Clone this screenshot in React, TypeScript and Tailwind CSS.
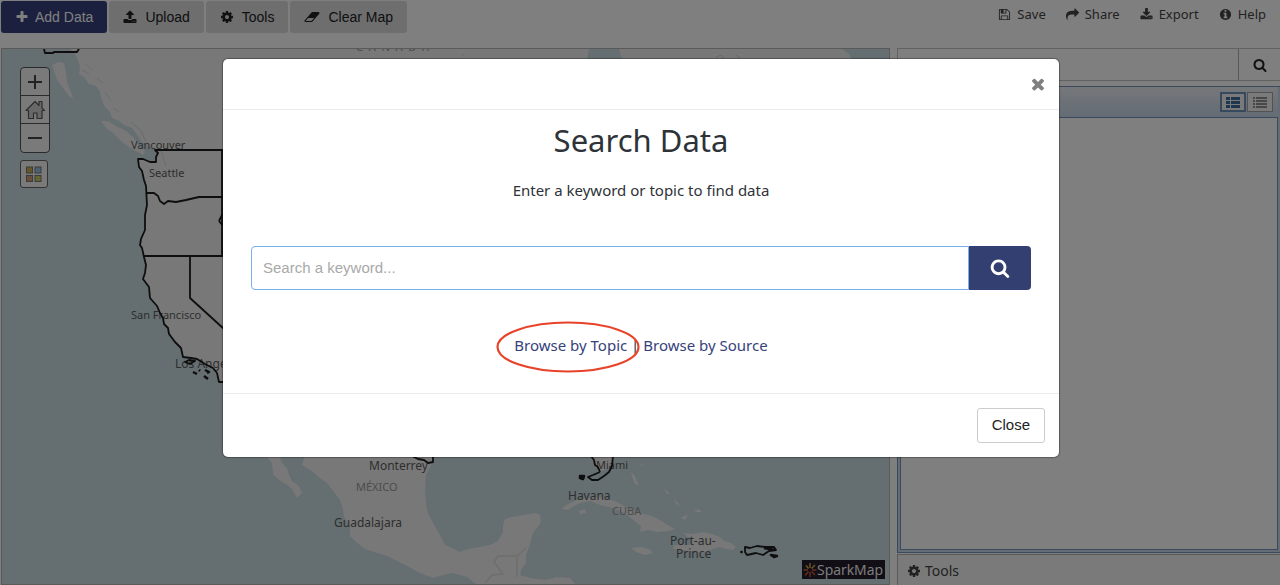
import type { ReactNode } from "react";

const icons = {
  plus: "M1600 736v192q0 40-28 68t-68 28h-416v416q0 40-28 68t-68 28h-192q-40 0-68-28t-28-68v-416h-416q-40 0-68-28t-28-68v-192q0-40 28-68t68-28h416v-416q0-40 28-68t68-28h192q40 0 68 28t28 68v416h416q40 0 68 28t28 68z",
  upload:
    "M1344 1472q0-26-19-45t-45-19-45 19-19 45 19 45 45 19 45-19 19-45zm256 0q0-26-19-45t-45-19-45 19-19 45 19 45 45 19 45-19 19-45zm128-224v320q0 40-28 68t-68 28h-1472q-40 0-68-28t-28-68v-320q0-40 28-68t68-28h427q21 56 70.5 92t110.5 36h256q61 0 110.5-36t70.5-92h427q40 0 68 28t28 68zm-325-648q-17 40-59 40h-256v448q0 26-19 45t-45 19h-256q-26 0-45-19t-19-45v-448h-256q-42 0-59-40-17-39 14-69l448-448q18-19 45-19t45 19l448 448q31 30 14 69z",
  cog: "M1152 896q0-106-75-181t-181-75-181 75-75 181 75 181 181 75 181-75 75-181zm512-109v222q0 12-8 23t-20 13l-185 28q-19 54-39 91 35 50 107 138 10 12 10 25t-9 23q-27 37-99 108t-94 71q-12 0-26-9l-138-108q-44 23-91 38-16 136-29 186-7 28-36 28h-222q-14 0-24.5-8.5t-11.5-21.5l-28-184q-49-16-90-37l-141 107q-10 9-25 9-14 0-25-11-126-114-165-168-7-10-7-23 0-12 8-23 15-21 51-66.5t54-70.5q-27-50-41-99l-183-27q-13-2-21-12.5t-8-23.5v-222q0-12 8-23t19-13l186-28q14-46 39-92-40-57-107-138-10-12-10-24 0-10 9-23 26-36 98.5-107.5t94.5-71.5q13 0 26 10l138 107q44-23 91-38 16-136 29-186 7-28 36-28h222q14 0 24.5 8.5t11.5 21.5l28 184q49 16 90 37l142-107q9-9 24-9 13 0 25 10 129 119 165 170 7 8 7 22 0 12-8 23-15 21-51 66.5t-54 70.5q26 50 41 98l183 28q13 2 21 12.5t8 23.5z",
  save: "M512 1536h768v-384h-768v384zm896 0h128v-896q0-14-10-38.5t-20-34.5l-281-281q-10-10-34-20t-39-10v416q0 40-28 68t-68 28h-576q-40 0-68-28t-28-68v-416h-128v1280h128v-416q0-40 28-68t68-28h832q40 0 68 28t28 68v416zm-384-928v-320q0-13-9.5-22.5t-22.5-9.5h-192q-13 0-22.5 9.5t-9.5 22.5v320q0 13 9.5 22.5t22.5 9.5h192q13 0 22.5-9.5t9.5-22.5zm640 32v928q0 40-28 68t-68 28h-1344q-40 0-68-28t-28-68v-1344q0-40 28-68t68-28h928q40 0 88 20t76 48l280 280q28 28 48 76t20 88z",
  share:
    "M1792 640q0 26-19 45l-512 512q-19 19-45 19t-45-19-19-45v-256h-224q-98 0-175.5 6t-154 21.5-133 42.5-105.5 69.5-80 101-48.5 138.5-17.5 181q0 55 5 123 0 6 2.5 23.5t2.5 26.5q0 15-8.500 25t-23.500 10q-16 0-28-17-7-9-13-22t-13.500-30-10.500-24q-127-285-127-451 0-199 53-333 162-403 875-403h224v-256q0-26 19-45t45-19 45 19l512 512q19 19 19 45z",
  download:
    "M1344 1344q0-26-19-45t-45-19-45 19-19 45 19 45 45 19 45-19 19-45zm256 0q0-26-19-45t-45-19-45 19-19 45 19 45 45 19 45-19 19-45zm128-224v320q0 40-28 68t-68 28h-1472q-40 0-68-28t-28-68v-320q0-40 28-68t68-28h465l135 136q58 56 136 56t136-56l136-136h464q40 0 68 28t28 68zm-325-569q17 41-14 70l-448 448q-18 19-45 19t-45-19l-448-448q-31-29-14-70 17-39 59-39h256v-448q0-26 19-45t45-19h256q26 0 45 19t19 45v448h256q42 0 59 39z",
  info: "M1152 1376v-160q0-14-9-23t-23-9h-96v-512q0-14-9-23t-23-9h-320q-14 0-23 9t-9 23v160q0 14 9 23t23 9h96v320h-96q-14 0-23 9t-9 23v160q0 14 9 23t23 9h448q14 0 23-9t9-23zm-128-896v-160q0-14-9-23t-23-9h-192q-14 0-23 9t-9 23v160q0 14 9 23t23 9h192q14 0 23-9t9-23zm640 416q0 209-103 385.5t-279.5 279.5-385.5 103-385.5-103-279.5-279.5-103-385.5 103-385.5 279.5-279.5 385.5-103 385.5 103 279.5 279.5 103 385.5z",
  search:
    "M1216 832q0-185-131.5-316.5t-316.5-131.5-316.5 131.5-131.5 316.5 131.5 316.5 316.5 131.5 316.5-131.5 131.5-316.5zm512 832q0 52-38 90t-90 38q-54 0-90-38l-343-342q-179 124-399 124-143 0-273.5-55.5t-225-150-150-225-55.5-273.5 55.5-273.5 150-225 225-150 273.5-55.5 273.5 55.5 225 150 150 225 55.5 273.5q0 220-124 399l343 343q37 37 37 90z",
  times:
    "M1490 1322q0 40-28 68l-136 136q-28 28-68 28t-68-28l-294-294-294 294q-28 28-68 28t-68-28l-136-136q-28-28-28-68t28-68l294-294-294-294q-28-28-28-68t28-68l136-136q28-28 68-28t68 28l294 294 294-294q28-28 68-28t68 28l136 136q28 28 28 68t-28 68l-294 294 294 294q28 28 28 68z",
};

function Icon({ name, className }: { name: keyof typeof icons; className: string }) {
  return (
    <svg viewBox="0 0 1792 1792" fill="currentColor" className={className} aria-hidden="true">
      <path d={icons[name]} />
    </svg>
  );
}

function Eraser() {
  return (
    <svg viewBox="0 0 2048 1792" fill="currentColor" className="h-3.5 w-4" aria-hidden="true">
      <path d="M960 1408l336-384h-768l-336 384h768zm1013-1077q15 34 9.5 71.5t-30.5 65.5l-896 1024q-38 44-96 44h-768q-38 0-69.5-20.5t-47.5-54.5q-15-34-9.5-71.5t30.5-65.5l896-1024q38-44 96-44h768q38 0 69.5 20.5t47.5 54.5z" />
    </svg>
  );
}

function ToolButton({ icon, label, primary }: { icon: ReactNode; label: string; primary?: boolean }) {
  return (
    <button
      className={
        primary
          ? "flex h-8 items-center gap-1.5 rounded-[3px] bg-[#36407c] px-3.5 text-sm text-white"
          : "flex h-8 items-center gap-2 rounded-[3px] bg-[#dcdcdc] px-3.5 text-sm text-[#222]"
      }
    >
      {icon}
      {label}
    </button>
  );
}

const links: { icon: keyof typeof icons; label: string }[] = [
  { icon: "save", label: "Save" },
  { icon: "share", label: "Share" },
  { icon: "download", label: "Export" },
  { icon: "info", label: "Help" },
];

function Header() {
  return (
    <header className="flex h-12 shrink-0 items-start justify-between pt-px pr-3.5 pl-px">
      <div className="flex gap-0.5">
        <ToolButton primary icon={<Icon name="plus" className="size-3.5" />} label="Add Data" />
        <ToolButton icon={<Icon name="upload" className="size-3.5" />} label="Upload" />
        <ToolButton icon={<Icon name="cog" className="size-3.5" />} label="Tools" />
        <ToolButton icon={<Eraser />} label="Clear Map" />
      </div>
      <nav className="flex gap-5 pt-[3px] font-['Noto_Sans',sans-serif] text-[13px] leading-5 text-[#444]">
        {links.map((l) => (
          <a key={l.label} href="#" className="flex items-center gap-1.5">
            <Icon name={l.icon} className="size-[13px]" />
            {l.label}
          </a>
        ))}
      </nav>
    </header>
  );
}

/* BASEMAP */
function Basemap() {
  return (
    <svg
      viewBox="2 49 887 535"
      preserveAspectRatio="xMinYMin slice"
      className="absolute inset-0 h-full w-full"
      aria-label="Map of North America"
    >
      <rect x="0" y="0" width="1400" height="900" fill="#cadce2" />

      {/* land */}
      <g fill="#f1f0f0">
        <path d="M70 49L74 52L77 58L80 66L79 74L84 77L89 84L96 86L100 92L102 101L105 107L110 112L112 118L119 121L124 125L132 128L137 135L142 142L148 146L157 151L156 162L150 162L143 159L138 159L140 168L144 178L147 192L147 205L145 230L140 245L144 257L146 265L143 279L149 287L150 298L157 308L163 318L168 330L175 340L182 349L183 357L197 359L213 368L219 382L240 382L600 400L600 100L586 66L589 49z" />
        <path d="M619 49L622 60L640 75L840 75L846 66L852 60L849 54L842 49z" />
        <path d="M52 65L58 62L64 63L66 72L67 82L71 92L73 99L68 95L63 88L57 80z" />
        <path d="M101 121L108 121L116 126L126 131L133 137L138 144L145 151L144 155L137 152L129 147L121 141L113 133L107 129z" />
        <path d="M267 457L272 463L273 474L279 480L287 485L292 489L297 498L302 493L299 486L292 481L289 475L287 468L282 463L280 457z" />
        <path d="M305 455L302 465L313 472L320 478L327 483L334 492L340 500L343 509L344 517L350 526L350 536L356 542L365 549L387 556L407 566L420 573L433 578L443 575L453 573L467 577L477 585L577 585L567 579L557 577L546 580L530 578L520 575L522 568L526 563L526 555L529 547L531 540L533 533L538 527L541 522L540 515L536 513L523 515L512 517L505 519L503 525L503 532L498 541L490 545L480 547L468 549L460 552L452 548L445 545L441 537L437 530L432 521L428 513L426 504L425 490L426 475L432 463L433 455z" />
        <path d="M590 455L595 465L600 472L610 467L613 455z" />
        <path d="M561 509L568 504L577 500L587 498L597 497L606 498L617 502L628 508L640 513L652 516L660 520L668 525L675 529L669 531L657 532L648 530L640 532L641 526L632 519L623 512L612 508L600 505L590 501L580 503L567 510z" />
        <path d="M579 511L585 509L586 513L580 514z" />
        <path d="M683 533L692 534L703 532L712 534L720 537L724 541L731 543L736 547L733 550L727 549L719 547L710 550L702 553L690 551L673 549L674 545L690 545L692 540z" />
        <path d="M631 548L641 547L649 549L653 553L645 555L636 552z" />
        <path d="M560 577L570 578L575 584L560 584z" />
        <path d="M631 472L635 476L639 486L634 483zM664 488L670 494L667 494zM674 499L680 505L676 504zM681 518L688 514L685 520zM694 511L699 509L702 512L697 512zM640 463L645 466L641 465z" />
      </g>

      {/* inlets along the coast */}
      <g fill="none" stroke="#cadce2" strokeWidth="1">
        <path d="M82 70L89 74M86 64L92 70M97 78L103 83M105 92L111 101M113 108L119 112M131 122L141 131L146 142M157 146L162 153L166 166M161 174L160 179" />
        <path d="M461 54l4 2M716 57l5-2l3 4M736 55l4 3" />
      </g>
      <path d="M485 583L492 575L503 574L494 562L498 556L517 556L517 577M517 556L526 548" fill="none" stroke="#dedcdc" strokeWidth="1.5" />

      {/* city labels */}
      <g className="font-['Noto_Sans',sans-serif]" fontSize="12" fill="#5c5c5c">
        <text x="131" y="149" fontSize="11">Vancouver</text>
        <text x="149" y="177" fontSize="11">Seattle</text>
        <text x="131" y="319" fontSize="11">San Francisco</text>
        <text x="175" y="368">Los Angeles</text>
        <text x="369" y="470">Monterrey</text>
        <text x="334" y="527">Guadalajara</text>
        <text x="596" y="469" fontSize="11">Miami</text>
        <text x="568" y="500">Havana</text>
        <text x="670" y="545">
          Port-au-
          <tspan x="676" y="558">Prince</tspan>
        </text>
        <g fontSize="11" fill="#999">
          <text x="356" y="491">MÉXICO</text>
          <text x="612" y="515">CUBA</text>
          <text x="356" y="51">{"C\u00a0\u00a0A\u00a0\u00a0N\u00a0\u00a0A\u00a0\u00a0D\u00a0\u00a0A"}</text>
        </g>
      </g>

      {/* state outlines */}
      <g fill="none" stroke="#1c1c1c" strokeWidth="1.8" strokeLinejoin="round">
        <path d="M44 49L45 53L53 53L54 52L77 52L79 49" />
        <path d="M223 150L155 150L158 153L156 157L156 162L150 162L143 159L138 159L139 167L142 171L144 180L146 186L147 205L145 215L145 230L141 239L140 245L142 248L144 257L146 265L145 273L143 279L149 287L150 298L157 306L160 313L163 318L164 324L168 328L169 334L175 342L181 348L183 357L191 358L197 359L205 364L213 368L217 373L219 382L224 382" />
        <path d="M147 193L154 193L158 196L160 201L164 204L168 201L176 202L186 200L199 197L223 197M222 150L222 256M144 256L224 256M190 256L190 298L224 329M219 221L223 213M219 221L223 226" />
        <path d="M185 362L189 360L195 361L190 364z" />
        <path d="M412 456L418 459L424 460L428 463L433 462L433 456" />
        <path d="M590 455L594 460L595 465L598 467L600 472M613 456L612 466L609 472L604 476L598 480L592 480L588 477L593 475L600 472" />
        <path d="M745 547L750 548L757 546L765 547L774 547L776 550L769 551L763 555L756 553L747 555L745 552z" />
        <path d="M764 548L775 550M771 555L777 556L774 557zM741 551L742 553M580 476L584 476L583 479L580 478z" strokeWidth="2.5" />
        <path d="M193 372L197 374M205 370L209 372L207 373M204 376L208 379M199 370L200 371" strokeWidth="2.5" />
      </g>
    </svg>
  );
}

function MapControls() {
  return (
    <div className="absolute top-[18px] left-[18px] flex flex-col items-start gap-[7px]">
      <div className="flex w-[30px] flex-col divide-y divide-[#555] overflow-hidden rounded-[4px] border border-[#555] bg-[#f4f4f4] text-[#444]">
        <button aria-label="Zoom in" className="flex h-7 items-center justify-center">
          <svg viewBox="0 0 14 14" className="size-3.5" stroke="currentColor" strokeWidth="2">
            <path d="M7 0v14M0 7h14" />
          </svg>
        </button>
        <button aria-label="Default extent" className="flex h-7 items-center justify-center">
          <svg viewBox="0 0 20 20" className="size-5" fill="#d0d0d0" stroke="#5a5a5a" strokeWidth="1.2" strokeLinejoin="round">
            <path d="M1 10.500L10 1.500L14 5.500V1.500H17V8L19.500 10.500H17V18.500H12V13H8.500V18.500H3.500V10.500z" />
          </svg>
        </button>
        <button aria-label="Zoom out" className="flex h-7 items-center justify-center">
          <svg viewBox="0 0 14 14" className="size-3.5" stroke="currentColor" strokeWidth="2">
            <path d="M0 7h14" />
          </svg>
        </button>
      </div>
      <button
        aria-label="Change basemap"
        className="flex size-7 items-center justify-center rounded-[3px] border border-[#666] bg-[#f4f4f4]"
      >
        <svg viewBox="0 0 16 16" className="size-4" stroke="#777">
          <rect x="0.500" y="1" width="6" height="6" fill="#c9b04e" />
          <rect x="9" y="1" width="6" height="6" fill="#94c6e4" />
          <rect x="0.500" y="9.500" width="6" height="6" fill="#cf9f78" />
          <rect x="9" y="9.500" width="6" height="6" fill="#cbcb5c" />
        </svg>
      </button>
    </div>
  );
}

function SparkMapLogo() {
  return (
    <a
      href="#"
      className="absolute right-1 bottom-[5px] flex h-[19px] items-center bg-[#221c2a] pr-0.5 pl-px font-['Open_Sans',sans-serif] text-sm text-white"
    >
      <svg viewBox="0 0 14 14" className="size-3.5" strokeWidth="1.400" fill="none">
        <path d="M7 5V0M8.500 5.500L12 2M5.500 5.500L3 2.500" stroke="#d9b54a" />
        <path d="M9 7H13.500M5 7H0.500M8.500 8.500L12 12M5.500 8.500L2 12.500M7 9V14" stroke="#d4573a" />
      </svg>
      SparkMap
    </a>
  );
}

function Sidebar() {
  return (
    <aside className="flex w-[383px] shrink-0 flex-col">
      <div className="flex h-[33px] shrink-0 border border-r-0 border-[#c4c4c4]">
        <input aria-label="Find a place" className="min-w-0 flex-1 bg-white px-2 text-sm outline-none" />
        <button aria-label="Find" className="flex w-[42px] items-center justify-center border-l border-[#b0b0b0] text-[#222]">
          <Icon name="search" className="size-3.5" />
        </button>
      </div>

      {/* LEGEND */}
      <section className="mt-[5px] flex min-h-0 flex-1 flex-col border border-r-0 border-[#7593b8] bg-[#c8d8ea] px-0.5 pb-0.5">
        <div className="flex h-[30px] shrink-0 items-center justify-end gap-px bg-linear-to-b from-[#eceff4] to-[#c8d8ea] pr-[5px]">
          <button aria-label="Grouped list" className="flex h-5 w-[26px] items-center justify-center border-2 border-[#6f93bd] bg-[#f4f4f4] text-[#3f6d9f]">
            <svg viewBox="0 0 14 11" className="h-[11px] w-3.5" fill="currentColor">
              <path d="M0 0h4v3H0zM5 0h9v3H5zM0 4h4v3H0zM5 4h9v3H5zM0 8h4v3H0zM5 8h9v3H5z" />
            </svg>
          </button>
          <button aria-label="Plain list" className="flex h-5 w-[26px] items-center justify-center border border-[#a5a5a5] bg-[#f4f4f4] text-[#909090]">
            <svg viewBox="0 0 14 11" className="h-[11px] w-3.5" fill="currentColor">
              <path d="M0 0h2v2H0zM3 0h11v2H3zM0 3h2v2H0zM3 3h11v2H3zM0 6h2v2H0zM3 6h11v2H3zM0 9h2v2H0zM3 9h11v2H3z" />
            </svg>
          </button>
        </div>
        <div className="flex-1 border border-[#7593b8] bg-white"></div>
      </section>

      <button className="mt-px flex h-[31px] shrink-0 items-center gap-1 border-t border-l border-[#b5b5b5] bg-[#f4f4f4] pt-px pl-[9px] font-['Noto_Sans',sans-serif] text-sm text-[#444]">
        <Icon name="cog" className="size-3.5" />
        Tools
      </button>
    </aside>
  );
}

function SearchModal() {
  return (
    <div className="absolute inset-0 flex items-start justify-center bg-black/50 pt-[59px] pr-4 pl-[18px]">
      <div
        role="dialog"
        aria-modal="true"
        aria-labelledby="search-title"
        className="w-full max-w-[836px] rounded-[5px] bg-white shadow-[0_0_1px_1px_rgba(0,0,0,0.3)]"
      >
        <div className="flex h-[51px] items-center justify-end border-b border-[#e9ecef] px-3">
          <button aria-label="Close dialog" className="text-[#7f7f7f]">
            <Icon name="times" className="size-[18px]" />
          </button>
        </div>

        <div className="px-7 pt-3 pb-9 text-center font-['Noto_Sans',sans-serif] text-[15px] leading-6 text-[#2e3338]">
          <h2 id="search-title" className="text-[31px] leading-9">Search Data</h2>
          <p className="mt-5">Enter a keyword or topic to find data</p>

          <form className="mt-11 flex h-11 font-['Liberation_Sans',Arial,sans-serif]">
            <input
              type="text"
              aria-label="Search a keyword"
              placeholder="Search a keyword..."
              className="min-w-0 flex-1 rounded-l-[4px] border border-[#78b0ee] px-[11px] text-[15px] outline-none placeholder:text-[#a9a9a9]"
            />
            <button type="button" aria-label="Search" className="flex w-[62px] items-center justify-center rounded-r-[4px] bg-[#333f70] text-white">
              <Icon name="search" className="size-5" />
            </button>
          </form>

          <div className="mt-[43px]">
            <span className="relative">
              <a href="#" className="text-[#36427a]">Browse by Topic</a>
              {/* hand-drawn highlight */}
              <svg viewBox="0 0 144 52" className="pointer-events-none absolute -top-3.5 -left-[18px] h-13 w-36" fill="none">
                <ellipse cx="72" cy="26" rx="70.500" ry="24.500" stroke="#e8432a" strokeWidth="2.200" />
              </svg>
            </span>
            {" | "}
            <a href="#" className="text-[#36427a]">Browse by Source</a>
          </div>
        </div>

        <div className="flex justify-end border-t border-[#e9ecef] px-3.5 py-3.5">
          <button className="h-[35px] rounded-[3px] border border-[#ccc] bg-white px-3.5 text-[15px] text-[#222]">Close</button>
        </div>
      </div>
    </div>
  );
}

export default function App() {
  return (
    <main className="relative flex h-screen flex-col overflow-hidden bg-white font-['Liberation_Sans',Arial,sans-serif]">
      <Header />
      <div className="flex min-h-0 flex-1">
        <section className="relative mr-[7px] ml-px min-w-0 flex-1 overflow-hidden border border-[#b5b5b5]">
          <Basemap />
          <MapControls />
          <SparkMapLogo />
        </section>
        <Sidebar />
      </div>
      <SearchModal />
    </main>
  );
}
